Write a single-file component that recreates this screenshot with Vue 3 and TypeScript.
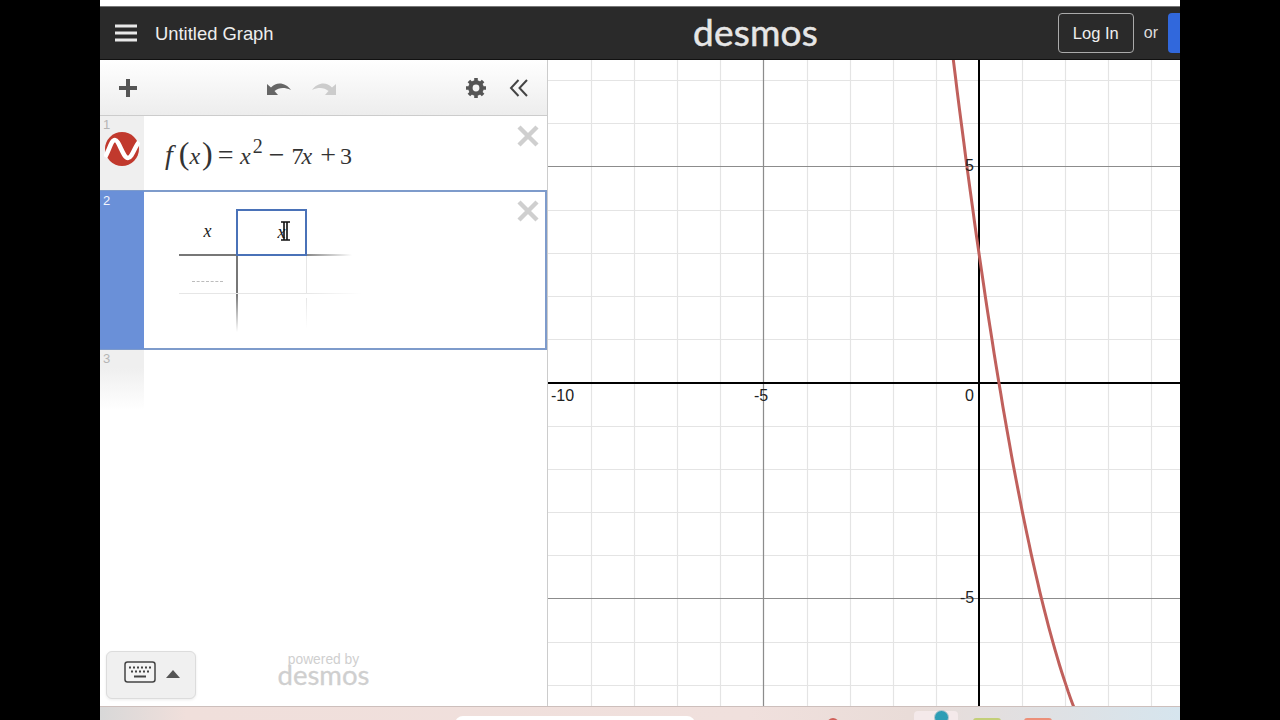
<template>
  <div class="screen">
    <div class="page">
      <div class="top-strip"></div>

      <header class="header">
        <div class="header-left">
          <svg class="hamburger" width="22" height="18" viewBox="0 0 22 18">
            <path d="M0 2h22M0 9h22M0 16h22" stroke="#e8e8e8" stroke-width="3" />
          </svg>
          <span class="graph-title">Untitled Graph</span>
        </div>
        <div class="header-logo">desmos</div>
        <div class="header-right">
          <button class="login">Log In</button>
          <span class="or">or</span>
          <span class="signup"></span>
        </div>
      </header>

      <main class="main">
        <section class="panel">
          <div class="toolbar">
            <svg class="plus" width="20" height="20" viewBox="0 0 20 20">
              <path d="M10 1v18M1 10h18" stroke="#555" stroke-width="4" />
            </svg>
            <div class="history">
              <svg width="24" height="16" viewBox="0 0 24 16">
                <path d="M0 4v11h11L7.500 11C12 7.500 17 7 24 10 19 3 10 1 4 7.500z" fill="#666" />
              </svg>
              <svg width="24" height="16" viewBox="0 0 24 16">
                <path d="M24 4v11H13l3.500-4C12 7.500 7 7 0 10 5 3 14 1 20 7.500z" fill="#ccc" />
              </svg>
            </div>
            <div class="tools">
              <svg width="22" height="22" viewBox="0 0 22 22">
                <circle cx="11" cy="11" r="5.600" fill="none" stroke="#555" stroke-width="4.400" />
                <path d="M11 1v4M11 17v4M1 11h4M17 11h4M3.900 3.900l2.800 2.800M15.300 15.300l2.800 2.800M3.900 18.100l2.800-2.800M15.300 6.700l2.800-2.800" stroke="#555" stroke-width="3.600" />
              </svg>
              <svg width="20" height="20" viewBox="0 0 20 20">
                <path d="M9.500 2 2 10l7.500 8M18 2l-7.500 8 7.500 8" fill="none" stroke="#444" stroke-width="2" />
              </svg>
            </div>
          </div>

          <div class="expr">
            <div class="gutter">
              <span class="index">1</span>
              <svg class="wave-icon" width="36" height="36" viewBox="0 0 36 36">
                <circle cx="18" cy="18" r="17" fill="#c1392d" />
                <path d="M1 26C5 20 7 9 11 9 15 9 19 27 24 27 28 27 31 15 35 11" fill="none" stroke="#fff" stroke-width="4.500" />
              </svg>
            </div>
            <div class="math">
              <i class="m-f">f</i>
              <span class="m-lp">(</span>
              <i>x</i>
              <span class="m-rp">)</span>
              <span class="m-eq">=</span>
              <i class="m-x2">x</i>
              <span class="m-sup">2</span>
              <span class="m-minus">−</span>
              <span class="m-seven">7</span>
              <i class="m-x3">x</i>
              <span class="m-plus">+</span>
              <span class="m-three">3</span>
            </div>
            <svg class="remove" width="22" height="22" viewBox="0 0 22 22">
              <path d="M2 2l18 18M20 2 2 20" stroke="#cfcfcf" stroke-width="4.400" />
            </svg>
          </div>

          <div class="expr table-expr">
            <div class="gutter">
              <span class="index">2</span>
            </div>
            <div class="table">
              <div class="cell head-x"><i>x</i></div>
              <div class="cell head-y">
                <i class="typed">x</i>
                <svg class="ibeam" width="9" height="20" viewBox="0 0 9 20">
                  <path d="M0 1h9M0 19h9M3 1v18M6 1v18" stroke="#111" stroke-width="1.600" fill="none" />
                </svg>
              </div>
              <div class="cell head-rest"></div>
              <div class="cell row-x"><span class="dashes"></span></div>
              <div class="cell row-y"></div>
              <div class="cell row-rest"></div>
              <div class="cell end-x"></div>
              <div class="cell end-y"></div>
              <div class="cell end-rest"></div>
            </div>
            <svg class="remove" width="22" height="22" viewBox="0 0 22 22">
              <path d="M2 2l18 18M20 2 2 20" stroke="#cfcfcf" stroke-width="4.400" />
            </svg>
          </div>

          <div class="expr empty-expr">
            <div class="gutter">
              <span class="index">3</span>
            </div>
          </div>

          <div class="panel-footer">
            <button class="keyboard">
              <svg width="32" height="22" viewBox="0 0 32 22">
                <rect x="1" y="1" width="30" height="20" rx="2.500" fill="#f4f4f4" stroke="#444" stroke-width="1.500" />
                <path d="M5 6.500h22M7 10.500h18" stroke="#444" stroke-width="2" stroke-dasharray="2 2" />
                <path d="M10 15.500h12" stroke="#444" stroke-width="2" />
              </svg>
              <span class="caret"></span>
            </button>
            <div class="powered">
              <span class="powered-by">powered by</span>
              <span class="powered-logo">desmos</span>
            </div>
          </div>
        </section>

        <section class="graph">
          <svg :width="graphWidth" :height="graphHeight" :viewBox="`0 0 ${graphWidth} ${graphHeight}`">
            <path v-for="x in minorX" :key="'mx' + x" :d="`M${x} 0V${graphHeight}`" class="minor" />
            <path v-for="y in minorY" :key="'my' + y" :d="`M0 ${y}H${graphWidth}`" class="minor" />
            <path v-for="x in majorX" :key="'Mx' + x" :d="`M${x} 0V${graphHeight}`" class="major" />
            <path v-for="y in majorY" :key="'My' + y" :d="`M0 ${y}H${graphWidth}`" class="major" />
            <path :d="`M${originX} 0V${graphHeight}`" class="axis" />
            <path :d="`M0 ${originY}H${graphWidth}`" class="axis" />
            <path :d="curve" class="curve" />
            <text x="3" y="341" class="tick">-10</text>
            <text x="206" y="341" class="tick">-5</text>
            <text x="417" y="341" class="tick">0</text>
            <text x="417" y="111" class="tick">5</text>
            <text x="412" y="543" class="tick">-5</text>
          </svg>
        </section>
      </main>

      <footer class="dock">
        <span class="dock-search"></span>
        <span class="dock-dot red"></span>
        <span class="dock-tile"><span class="dock-dot teal"></span></span>
        <span class="dock-app green"></span>
        <span class="dock-app orange"></span>
      </footer>
    </div>
  </div>
</template>

<script setup lang="ts">
import { computed } from 'vue'

const graphWidth = 632
const graphHeight = 646
const originX = 431
const originY = 323
const scaleX = 43.1
const scaleY = 43.2

// grid lines sit a hair off the axes so they land on the same pixel rows as the reference
const steps = (origin: number, scale: number, size: number, every: number) => {
  const out: number[] = []
  for (let k = -30; k <= 30; k++) {
    const p = origin + k * every * scale
    if (k !== 0 && p >= 0 && p <= size) out.push(Math.round(p) + 0.5)
  }
  return out
}

const minorX = steps(originX - 0.1, scaleX, graphWidth, 1)
const minorY = steps(originY - 0.6, scaleY, graphHeight, 1)
const majorX = steps(originX - 0.1, scaleX, graphWidth, 5)
const majorY = steps(originY - 0.6, scaleY, graphHeight, 5)

// f(x) = x^2 - 7x + 3
const curve = computed(() => {
  const pts: string[] = []
  for (let x = -0.8; x <= 2.4; x += 0.05) {
    const y = x * x - 7 * x + 3
    pts.push(`${(originX + x * scaleX * 1.01).toFixed(1)} ${(originY - y * scaleY).toFixed(1)}`)
  }
  return 'M' + pts.join('L')
})
</script>

<style>
html,
body {
  margin: 0;
  background: #000;
}
</style>

<style scoped>
.screen {
  width: 1280px;
  height: 720px;
  background: #000;
  display: flex;
  justify-content: center;
  overflow: hidden;
  font-family: "Liberation Sans", Arial, sans-serif;
}

.page {
  width: 1080px;
  height: 720px;
  display: flex;
  flex-direction: column;
  background: #fff;
}

.top-strip {
  height: 6px;
  background: #fff;
  flex-shrink: 0;
}

.header {
  height: 54px;
  flex-shrink: 0;
  background: #2a2a2a;
  border-top: 1px solid #777;
  border-bottom: 1px solid #111;
  box-sizing: border-box;
  display: flex;
  align-items: center;
  color: #eee;
  overflow: hidden;
}

.header-left {
  width: 593px;
  flex-shrink: 0;
  box-sizing: border-box;
  display: flex;
  align-items: center;
  padding-left: 15px;
}

.hamburger {
  display: block;
}

.graph-title {
  margin-left: 18px;
  font-size: 18.4px;
  line-height: 22px;
  margin-top: 1px;
}

.header-logo {
  font-family: Lato, "Open Sans", sans-serif;
  font-size: 37px;
  font-weight: 400;
  letter-spacing: 0.2px;
  color: #e6e6e6;
  -webkit-text-stroke: 0.5px #e6e6e6;
  line-height: 1;
  margin-top: -3px;
}

.header-right {
  margin-left: auto;
  display: flex;
  align-items: center;
}

.login {
  width: 76px;
  height: 40px;
  background: transparent;
  border: 1px solid #aaa;
  border-radius: 4px;
  color: #eee;
  font-family: inherit;
  font-size: 16.5px;
  padding: 0;
}

.or {
  margin: 0 10px;
  font-size: 16px;
  color: #ddd;
}

.signup {
  width: 12px;
  height: 40px;
  background: #3168dc;
  border-radius: 4px 0 0 4px;
}

.main {
  flex: 1;
  min-height: 0;
  display: flex;
}

.panel {
  width: 448px;
  flex-shrink: 0;
  box-sizing: border-box;
  border-right: 1px solid #ccc;
  display: flex;
  flex-direction: column;
  background: #fff;
}

.toolbar {
  height: 56px;
  flex-shrink: 0;
  box-sizing: border-box;
  border-bottom: 1px solid #ccc;
  background: linear-gradient(#fff, #ededed);
  display: grid;
  grid-template-columns: 1fr auto 1fr;
  align-items: center;
  padding: 0 18px;
}

.plus {
  display: block;
}

.history {
  display: flex;
  gap: 21px;
  margin-right: 44px;
}

.tools {
  display: flex;
  justify-content: flex-end;
  align-items: center;
  gap: 22px;
}

.expr {
  display: flex;
  position: relative;
  height: 74px;
  flex-shrink: 0;
  box-sizing: border-box;
}

.gutter {
  width: 44px;
  flex-shrink: 0;
  background: #efefef;
  position: relative;
}

.index {
  position: absolute;
  left: 3px;
  top: 1px;
  font-size: 13px;
  color: #b5b5b5;
}

.wave-icon {
  position: absolute;
  left: 4px;
  top: 15px;
}

.math {
  font-family: "Liberation Serif", "Times New Roman", serif;
  font-size: 24px;
  color: #333;
  margin: 19px 0 0 20px;
  height: 36px;
  display: flex;
  align-items: baseline;
  white-space: nowrap;
}

.m-f {
  font-size: 28px;
  margin-left: 1px;
}

.m-lp,
.m-rp {
  font-size: 32px;
  font-weight: 400;
}

.m-lp {
  margin-left: 6px;
}

.m-rp {
  margin-left: 2px;
}

.m-eq,
.m-minus,
.m-plus {
  font-size: 28px;
}

.m-eq {
  margin-left: 5px;
}

.m-x2 {
  margin-left: 6.5px;
}

.m-sup {
  font-size: 20px;
  margin-left: 2px;
  position: relative;
  top: -11px;
}

.m-minus {
  margin-left: 6px;
}

.m-seven {
  margin-left: 7px;
}

.m-x3 {
  margin-left: -2px;
}

.m-plus {
  margin-left: 8px;
}

.m-three {
  margin-left: 4px;
}

.remove {
  position: absolute;
  right: 8px;
  top: 9px;
}

.table-expr {
  height: 160px;
  border: 2px solid #7e9bcb;
  border-left: 0;
  width: 447px;
}

.table-expr .gutter {
  background: #6a90d8;
  margin-top: -1px;
  margin-bottom: -1px;
}

.table-expr .index {
  top: 2px;
  color: #f2f6fd;
}

.table-expr .remove {
  right: 6px;
  top: 8px;
}

.table {
  margin: 17px 0 0 35px;
  display: grid;
  grid-template-columns: 57px 71px 55px;
  grid-template-rows: 47px 38px 38px;
  font-family: "Liberation Serif", serif;
  font-size: 18px;
  color: #222;
}

.cell {
  box-sizing: border-box;
  display: flex;
  align-items: center;
  justify-content: center;
  position: relative;
}

.head-x {
  border-bottom: 2px solid #777;
}

.head-y {
  border: 2px solid #4a72b8;
}

.typed {
  position: relative;
  left: 10px;
}

.ibeam {
  position: absolute;
  left: 43px;
  top: 10px;
}

.head-rest {
  background: linear-gradient(to right, #888, rgba(136, 136, 136, 0)) bottom / 100% 2px no-repeat;
  width: 45px;
}

.row-x {
  background: linear-gradient(#e6e6e6, #e6e6e6) bottom / 100% 1px no-repeat;
}

.row-y {
  background:
    linear-gradient(#e6e6e6, #e6e6e6) bottom / 100% 1px no-repeat,
    linear-gradient(#777, #777) left / 2px 100% no-repeat,
    linear-gradient(#e6e6e6, #e6e6e6) right / 1px 100% no-repeat;
}

.row-rest {
  background: linear-gradient(to right, #e6e6e6, rgba(230, 230, 230, 0)) bottom / 100% 1px no-repeat;
}

.dashes {
  width: 31px;
  height: 0;
  border-top: 1px dashed #bcbcbc;
  margin-top: 13px;
}

.end-y {
  background:
    linear-gradient(#777, rgba(119, 119, 119, 0)) left / 2px 100% no-repeat,
    linear-gradient(#e6e6e6, rgba(230, 230, 230, 0)) right / 1px 80% no-repeat;
}

.empty-expr {
  height: 60px;
}

.empty-expr .gutter {
  background: linear-gradient(#efefef 30%, #fff);
}

.panel-footer {
  margin-top: auto;
  display: grid;
  grid-template-columns: 1fr auto 1fr;
  align-items: end;
  padding: 0 6px 7px;
}

.keyboard {
  width: 90px;
  height: 48px;
  box-sizing: border-box;
  background: #f0f0f0;
  border: 1px solid #dcdcdc;
  border-radius: 6px;
  box-shadow: 0 1px 3px rgba(0, 0, 0, 0.08);
  display: flex;
  align-items: center;
  gap: 10px;
  padding: 0 0 6px 17px;
}

.caret {
  width: 0;
  height: 0;
  border-left: 7px solid transparent;
  border-right: 7px solid transparent;
  border-bottom: 8px solid #555;
  margin-top: 3px;
}

.powered {
  display: flex;
  flex-direction: column;
  align-items: center;
  color: #cfcfcf;
  margin-bottom: 16px;
  grid-column: 2;
}

.powered-by {
  font-size: 13.8px;
  line-height: 14px;
}

.powered-logo {
  font-family: Lato, "Open Sans", sans-serif;
  font-size: 27.5px;
  line-height: 16px;
  -webkit-text-stroke: 0.3px #cfcfcf;
}

.graph {
  flex: 1;
  min-width: 0;
  overflow: hidden;
  background: #fff;
}

.graph svg {
  display: block;
}

.minor {
  stroke: #e4e4e4;
  stroke-width: 1.2;
}

.major {
  stroke: #8c8c8c;
  stroke-width: 1.2;
}

.axis {
  stroke: #000;
  stroke-width: 2;
}

.curve {
  fill: none;
  stroke: #c0605c;
  stroke-width: 3;
}

.tick {
  font-family: "Liberation Sans", Arial, sans-serif;
  font-size: 16px;
  fill: #222;
}

.dock {
  height: 14px;
  flex-shrink: 0;
  position: relative;
  overflow: hidden;
  border-top: 1px solid #cdbfbc;
  box-sizing: border-box;
  background: linear-gradient(to right, #d8d8d8, #f0dfdb 8%, #f0e0dd 60%, #e9dcd8 75%, #d6e5ee 100%);
}

.dock-search {
  position: absolute;
  left: 355px;
  top: 9px;
  width: 240px;
  height: 12px;
  border-radius: 8px 8px 0 0;
  background: #fff;
}

.dock-tile {
  position: absolute;
  left: 814px;
  top: 4px;
  width: 44px;
  height: 12px;
  border-radius: 4px 4px 0 0;
  background: #f4e9ea;
}

.dock-dot {
  position: absolute;
  border-radius: 50%;
}

.dock-dot.red {
  left: 727px;
  top: 11px;
  width: 12px;
  height: 12px;
  background: #d0605a;
}

.dock-dot.teal {
  left: 20px;
  top: -1px;
  width: 13px;
  height: 13px;
  background: #2d9db5;
  border: 1px solid #b8c8d0;
}

.dock-app {
  position: absolute;
  top: 11px;
  width: 28px;
  height: 8px;
  border-radius: 3px 3px 0 0;
}

.dock-app.green {
  left: 873px;
  background: #c3cf78;
}

.dock-app.orange {
  left: 924px;
  background: #ec8f78;
}
</style>
